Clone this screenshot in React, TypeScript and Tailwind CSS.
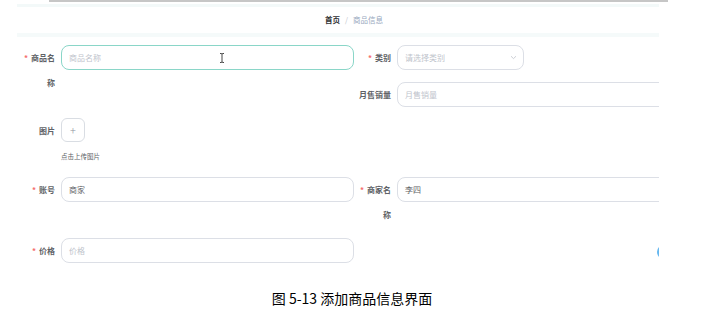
import React from "react";

const font = { fontFamily: '"Noto Sans CJK SC", "Noto Sans", sans-serif' };

function Star() {
  return <span className="mr-[3px] text-[#f56c6c]">*</span>;
}

function Chevron() {
  return (
    <svg width="7" height="5" viewBox="0 0 7 5" className="shrink-0">
      <path d="M1 1.2 L3.5 3.6 L6 1.2" fill="none" stroke="#c0c4cc" strokeWidth="0.8" />
    </svg>
  );
}

export default function App() {
  return (
    <div className="w-[704px] h-[329px] bg-white overflow-hidden" style={font}>
      <div className="ml-[49px] w-[619px] h-[2px] bg-[#c6c6c6]" />

      <div className="ml-[17px] w-[642px] overflow-hidden relative">
        <div className="mt-[2px] h-[3px] bg-[#f3f9f9]" />
        <div className="h-[26px] flex items-center pl-[308px] text-[7.5px]">
          <span className="font-bold text-[#303133]">首页</span>
          <span className="mx-[5px] text-[#c0c4cc]">/</span>
          <span className="text-[#97a8be]">商品信息</span>
        </div>
        <div className="h-[4px] bg-[#f5fafa]" />

        <div className="pt-[8px] text-[8px]">
          {/* first block */}
          <div className="flex items-start">
            <div className="w-[337px] flex flex-col">
              <div className="flex items-start">
                <div className="w-[44px] shrink-0 pr-[6px] text-right leading-[25px] font-semibold text-[#606266]">
                  <Star />商品名称
                </div>
                <div className="relative w-[293px] h-[25px] rounded-[8px] border border-[#8ad6c8] flex items-center pl-[7px] text-[#c0c4cc]">
                  商品名称
                  <svg width="6" height="10" viewBox="0 0 6 10" className="absolute left-[157px] top-[7px]">
                    <path d="M1 0.5 H2.4 Q3 0.5 3 1.4 Q3 0.5 3.6 0.5 H5 M3 1.4 V8.6 M1 9.5 H2.4 Q3 9.5 3 8.6 Q3 9.5 3.6 9.5 H5" fill="none" stroke="#333" strokeWidth="0.9" />
                  </svg>
                </div>
              </div>
              <div className="flex items-start mt-[23px]">
                <div className="w-[44px] shrink-0 pr-[6px] text-right leading-[25px] font-semibold text-[#606266]">
                  图片
                </div>
                <div className="flex flex-col">
                  <div className="w-[24px] h-[24px] rounded-[6px] border border-[#d9dde3] flex items-center justify-center text-[11px] leading-none text-[#8c939d] font-light">
                    +
                  </div>
                  <div className="mt-[10px] text-[6.5px] leading-[8px] text-[#606266]">点击上传图片</div>
                </div>
              </div>
            </div>

            <div className="flex flex-col">
              <div className="flex items-start">
                <div className="w-[43px] shrink-0 pr-[6px] text-right leading-[25px] font-semibold text-[#606266]">
                  <Star />类别
                </div>
                <div className="w-[127px] h-[25px] rounded-[8px] border border-[#dcdfe6] flex items-center justify-between pl-[7px] pr-[6px] text-[#c0c4cc]">
                  请选择类别
                  <Chevron />
                </div>
              </div>
              <div className="flex items-start mt-[12px]">
                <div className="w-[43px] shrink-0 pr-[6px] text-right leading-[25px] font-semibold text-[#606266]">
                  月售销量
                </div>
                <div className="w-[293px] h-[25px] rounded-[8px] border border-[#dcdfe6] flex items-center pl-[7px] text-[#c0c4cc]">
                  月售销量
                </div>
              </div>
            </div>
          </div>

          {/* second block */}
          <div className="flex items-start mt-[17px]">
            <div className="w-[337px] flex items-start">
              <div className="w-[44px] shrink-0 pr-[6px] text-right leading-[25px] font-semibold text-[#606266]">
                <Star />账号
              </div>
              <div className="w-[293px] h-[25px] rounded-[8px] border border-[#dcdfe6] flex items-center pl-[7px] text-[#606266]">
                商家
              </div>
            </div>
            <div className="flex items-start">
              <div className="w-[43px] shrink-0 pr-[6px] text-right leading-[25px] font-semibold text-[#606266]">
                <Star />商家名称
              </div>
              <div className="w-[293px] h-[25px] rounded-[8px] border border-[#dcdfe6] flex items-center pl-[7px] text-[#606266]">
                李四
              </div>
            </div>
          </div>

          {/* third block */}
          <div className="flex items-start mt-[11px]">
            <div className="w-[44px] shrink-0 pr-[6px] text-right leading-[25px] font-semibold text-[#606266]">
              <Star />价格
            </div>
            <div className="w-[293px] h-[25px] rounded-[8px] border border-[#dcdfe6] flex items-center pl-[7px] text-[#c0c4cc]">
              价格
            </div>
          </div>
        </div>

        <div className="absolute left-[640px] top-[243px] w-[14px] h-[14px] rounded-full bg-[#67b8f0]" />
      </div>

      <div className="mt-[25px] h-[20px] flex items-center justify-center text-[14px] text-black">
        图 5-13 添加商品信息界面
      </div>
    </div>
  );
}
